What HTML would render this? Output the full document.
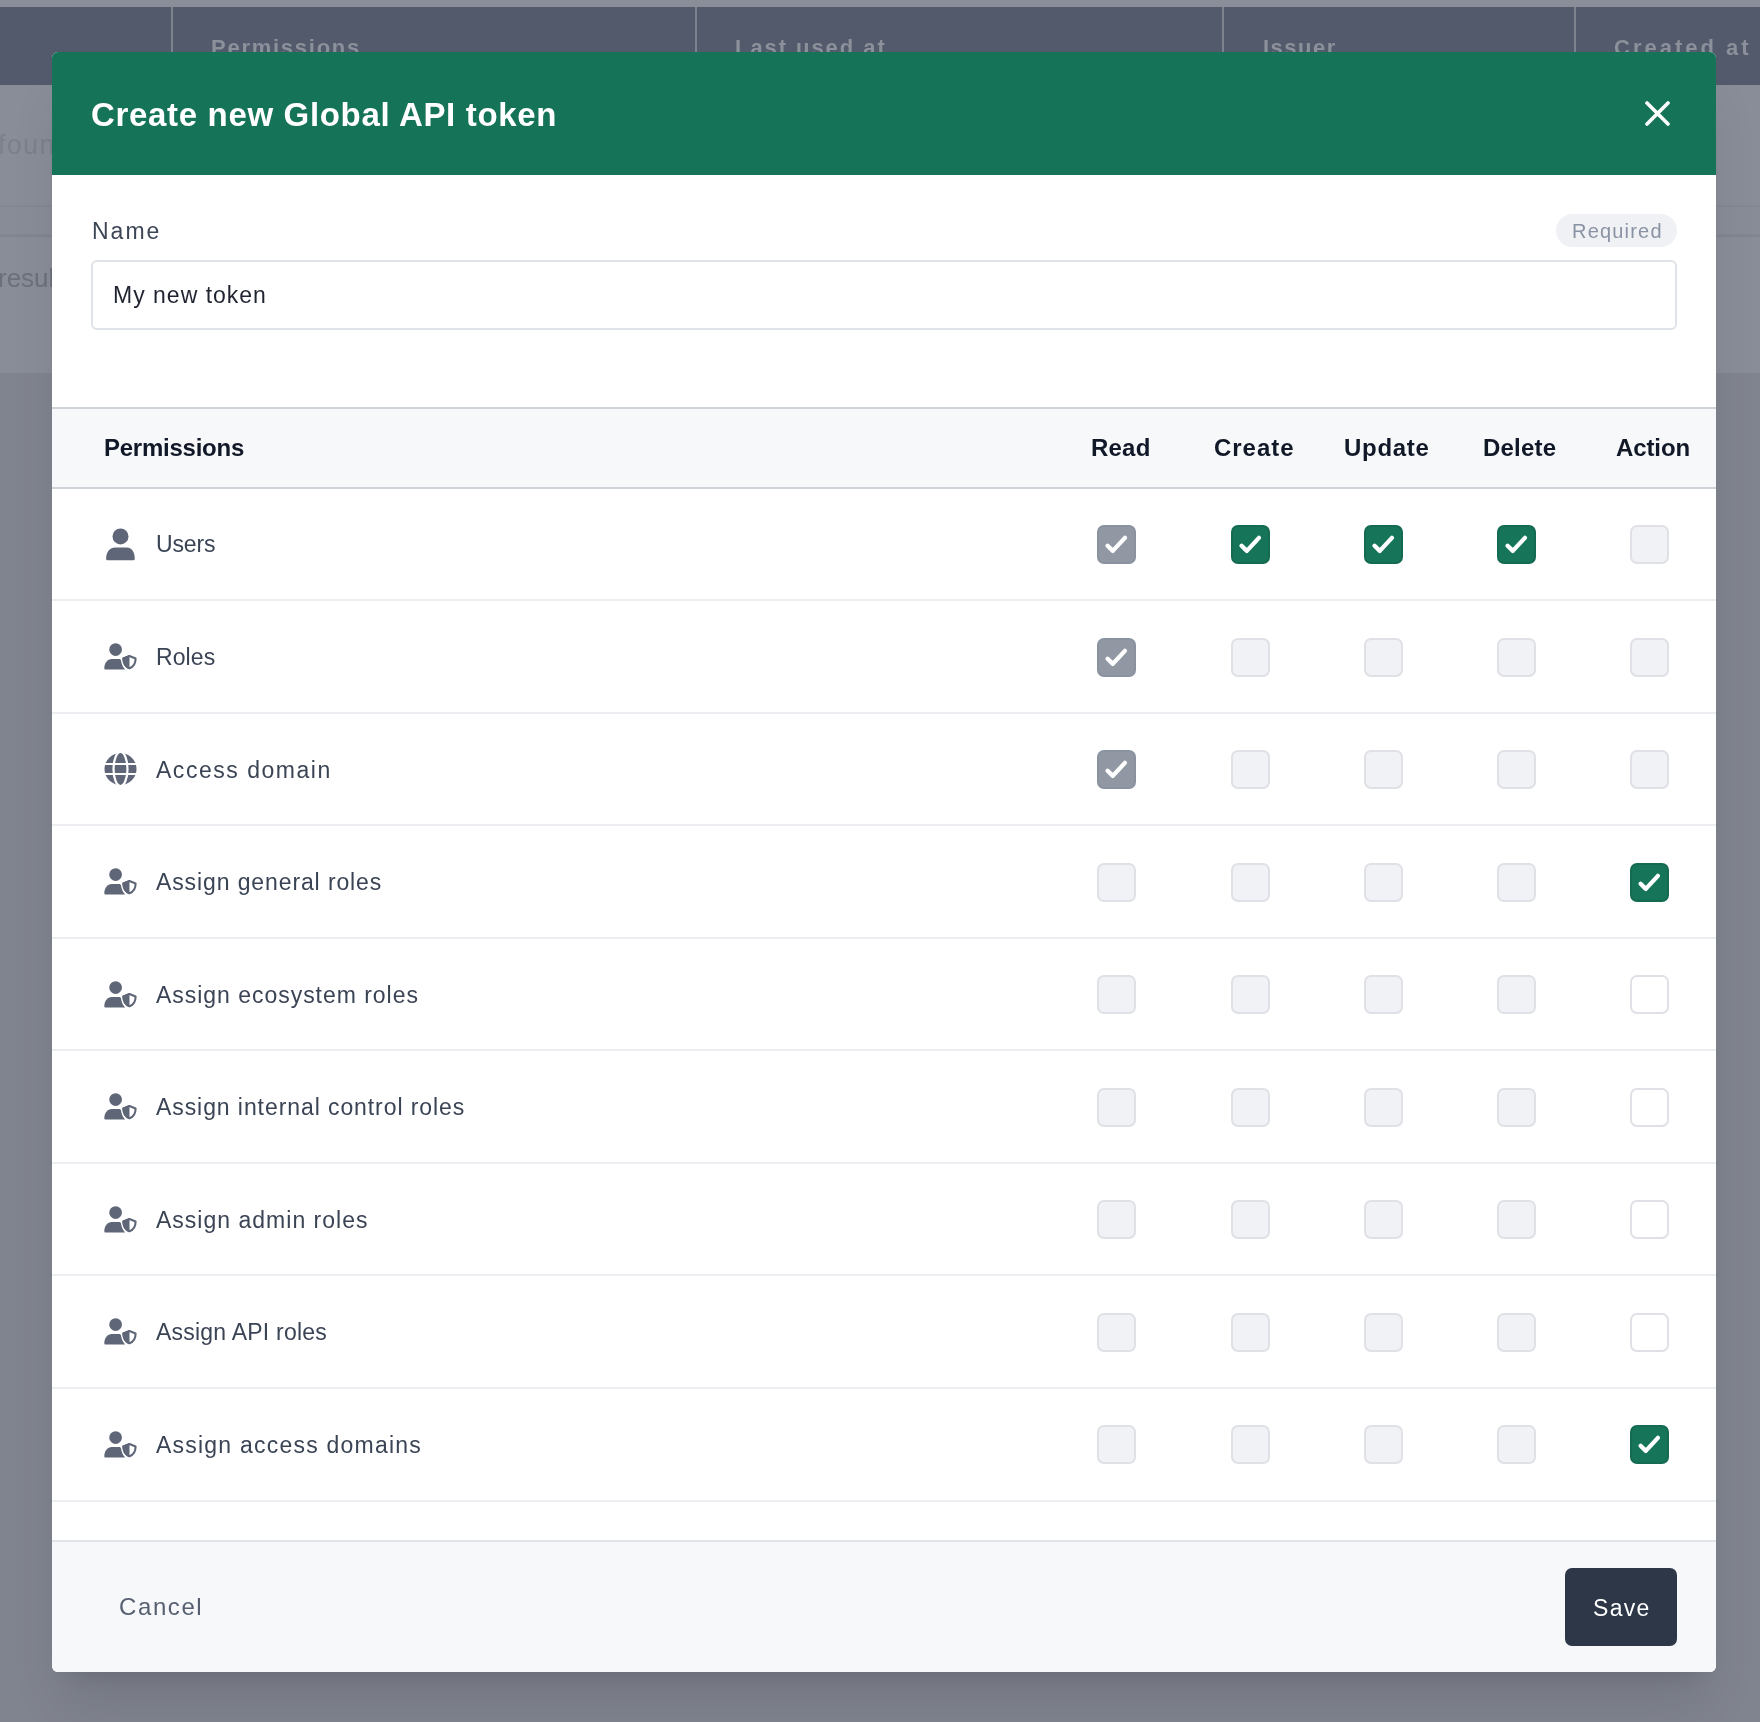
<!DOCTYPE html>
<html><head><meta charset="utf-8">
<style>
*{box-sizing:border-box;margin:0;padding:0}
html,body{width:1760px;height:1722px;overflow:hidden}
body{position:relative;background:#80848f;font-family:"Liberation Sans",sans-serif}
.a{position:absolute}
.t{position:absolute;white-space:nowrap;line-height:1}
/* background page */
#bgtop{left:0;top:0;width:1760px;height:7px;background:#8a8e99}
#bghead{left:0;top:7px;width:1760px;height:78px;background:#535a6b}
.div{top:7px;width:2px;height:78px;background:#7d828e}
.bgtxt{will-change:transform;color:#8c909b;font-size:22px;font-weight:bold;top:36.5px}
#bgrow1{left:0;top:85px;width:1760px;height:120px;background:#898d98}
#bgrow2{left:0;top:205px;width:1760px;height:31px;background:#888c97;border-top:2px solid #838792;border-bottom:2px solid #838792}
#bgrow3{left:0;top:237px;width:1760px;height:136px;background:#898d98}
/* modal */
#modal{will-change:transform;left:52px;top:52px;width:1664px;height:1620px;background:#fff;border-radius:6px;overflow:hidden;
 box-shadow:0 40px 50px -10px rgba(0,0,0,.1),0 16px 20px -12px rgba(0,0,0,.1)}
#mhead{left:0;top:0;width:1664px;height:123px;background:#157357}
#title{left:39px;top:46px;font-size:33px;font-weight:bold;color:#fff;letter-spacing:0.67px}
#close{left:1593px;top:49px;width:25px;height:25px}
#name{left:40px;top:167.5px;font-size:23px;color:#3d4657;letter-spacing:2px}
#req{left:1504px;top:162px;width:121px;height:33px;border-radius:17px;background:#eff1f4}
#reqt{left:1520px;top:168.5px;font-size:20px;color:#8a93a3;letter-spacing:1.2px}
#input{left:39px;top:208px;width:1586px;height:69.5px;border:2px solid #dfe2e7;border-radius:6px;background:#fff}
#inputt{left:61px;top:231.5px;font-size:23px;color:#1f2430;letter-spacing:1px}
#thead{left:0;top:355px;width:1664px;height:82px;background:#f7f8fa;border-top:2px solid #cfd3da;border-bottom:2px solid #cfd3da}
.th{font-size:24px;font-weight:bold;color:#111827;top:384px}
.row{left:0;width:1664px;height:2px;background:#eceef1}
.rt{left:104px;font-size:23px;color:#3b4455;letter-spacing:0.6px}
.ic{left:50px;width:36px;height:36px}
.cb{width:39px;height:39px;border-radius:7px;border:2px solid #dfe1e6;background:#f0f2f5}
.cb.w{background:#fff}
.cb.g{background:#167458;border-color:#146b51}
.cb.d{background:#9198a4;border-color:#8a92a0}
.cb svg{position:absolute;left:-2px;top:-2px}
#footer{left:0;top:1488px;width:1664px;height:132px;background:#f7f8fa;border-top:2px solid #e2e4e9}
#cancel{left:67px;top:1543px;font-size:24px;color:#576071;letter-spacing:1.6px}
#save{left:1513px;top:1516px;width:112px;height:78px;border-radius:7px;background:#2d3748}
#savet{left:1541px;top:1544.5px;font-size:23px;color:#fff;letter-spacing:1.3px}
</style></head>
<body>
<div class="a" id="bgtop"></div>
<div class="a" id="bghead"></div>
<div class="a div" style="left:171px"></div>
<div class="a div" style="left:695px"></div>
<div class="a div" style="left:1222px"></div>
<div class="a div" style="left:1574px"></div>
<div class="t bgtxt" style="left:211px;letter-spacing:1.74px">Permissions</div>
<div class="t bgtxt" style="left:735px;letter-spacing:1.94px">Last used at</div>
<div class="t bgtxt" style="left:1263px;letter-spacing:1.48px">Issuer</div>
<div class="t bgtxt" style="left:1614px;letter-spacing:2.99px">Created at</div>
<div class="a" id="bgrow1"></div>
<div class="a" id="bgrow2"></div>
<div class="a" id="bgrow3"></div>
<div class="t" style="will-change:transform;left:-2px;top:132px;font-size:27px;color:#7b808b;letter-spacing:1.3px">foun</div>
<div class="t" style="will-change:transform;left:-2px;top:265px;font-size:26px;color:#6b707c">resul</div>

<div class="a" id="modal">
 <div class="a" id="mhead"></div>
 <div class="t" id="title">Create new Global API token</div>
 <svg class="a" id="close" viewBox="0 0 25 25"><path d="M2 2L23 23M23 2L2 23" stroke="#fff" stroke-width="3.6" stroke-linecap="round"/></svg>
 <div class="t" id="name">Name</div>
 <div class="a" id="req"></div>
 <div class="t" id="reqt">Required</div>
 <div class="a" id="input"></div>
 <div class="t" id="inputt">My new token</div>
 <div class="a" id="thead"></div>
 <div class="t th" style="left:52px;letter-spacing:-0.25px">Permissions</div>
 <div class="t th" style="left:1039px;letter-spacing:0.2px">Read</div>
 <div class="t th" style="left:1162px;letter-spacing:0.96px">Create</div>
 <div class="t th" style="left:1292px;letter-spacing:0.7px">Update</div>
 <div class="t th" style="left:1431px;letter-spacing:0.2px">Delete</div>
 <div class="t th" style="left:1564px;letter-spacing:-0.1px">Action</div>
 <!--ROWS-->
<div class="a row" style="top:547.0px"></div>
<svg class="a ic" style="top:475.1px" viewBox="0 0 36 36"><circle cx="18.5" cy="9.4" r="8" fill="#5f6678"/><path d="M5.6 33.3 Q4.1 33.3 4.1 31.8 C4.1 25 8 20.6 13.1 20.6 L24.8 20.6 C29.5 20.6 32.75 25 32.75 31.8 Q32.75 33.3 31.25 33.3 Z" fill="#5f6678"/></svg>
<div class="t rt" style="top:481.4px;letter-spacing:-0.15px">Users</div>
<div class="a cb d" style="left:1045px;top:472.9px"><svg width="39" height="39" viewBox="0 0 39 39"><path d="M10.6 20.8L15.8 25.9L27.9 12.9" fill="none" stroke="#fff" stroke-width="4.3" stroke-linecap="round" stroke-linejoin="round"/></svg></div>
<div class="a cb g" style="left:1179px;top:472.9px"><svg width="39" height="39" viewBox="0 0 39 39"><path d="M10.6 20.8L15.8 25.9L27.9 12.9" fill="none" stroke="#fff" stroke-width="4.3" stroke-linecap="round" stroke-linejoin="round"/></svg></div>
<div class="a cb g" style="left:1312px;top:472.9px"><svg width="39" height="39" viewBox="0 0 39 39"><path d="M10.6 20.8L15.8 25.9L27.9 12.9" fill="none" stroke="#fff" stroke-width="4.3" stroke-linecap="round" stroke-linejoin="round"/></svg></div>
<div class="a cb g" style="left:1445px;top:472.9px"><svg width="39" height="39" viewBox="0 0 39 39"><path d="M10.6 20.8L15.8 25.9L27.9 12.9" fill="none" stroke="#fff" stroke-width="4.3" stroke-linecap="round" stroke-linejoin="round"/></svg></div>
<div class="a cb" style="left:1578px;top:472.9px"></div>
<div class="a row" style="top:659.6px"></div>
<svg class="a ic" style="top:586.2px" viewBox="0 0 36 36"><circle cx="13.6" cy="11.55" r="6.35" fill="#5f6678"/><path d="M3.3 31.4 Q2.3 31.4 2.3 30.2 C2.3 25 5.5 20.9 9.8 20.9 L17.4 20.9 C18.3 20.9 18.8 21.6 19 22.4 C19.6 26 20.8 28.8 23.1 31.4 Z" fill="#5f6678"/><path d="M27.5 18.1 L33.6 20.5 C33.6 25.6 31.2 28.9 27.5 30.2 C23.8 28.9 21.4 25.6 21.4 20.5 Z" fill="none" stroke="#5f6678" stroke-width="2.1" stroke-linejoin="round"/><path d="M27.5 17 L20.4 19.8 C20.4 26 23.4 30.1 27.5 31.3 Z" fill="#5f6678"/></svg>
<div class="t rt" style="top:594.0px;letter-spacing:0.10px">Roles</div>
<div class="a cb d" style="left:1045px;top:585.5px"><svg width="39" height="39" viewBox="0 0 39 39"><path d="M10.6 20.8L15.8 25.9L27.9 12.9" fill="none" stroke="#fff" stroke-width="4.3" stroke-linecap="round" stroke-linejoin="round"/></svg></div>
<div class="a cb" style="left:1179px;top:585.5px"></div>
<div class="a cb" style="left:1312px;top:585.5px"></div>
<div class="a cb" style="left:1445px;top:585.5px"></div>
<div class="a cb" style="left:1578px;top:585.5px"></div>
<div class="a row" style="top:772.1px"></div>
<svg class="a ic" style="top:698.5px" viewBox="0 0 36 36"><circle cx="18.5" cy="18" r="16" fill="#5f6678"/><g fill="none" stroke="#fff" stroke-width="2.2"><path d="M1 13H36M1 23H36"/><ellipse cx="18.5" cy="18" rx="7" ry="17"/></g></svg>
<div class="t rt" style="top:706.5px;letter-spacing:1.52px">Access domain</div>
<div class="a cb d" style="left:1045px;top:698.0px"><svg width="39" height="39" viewBox="0 0 39 39"><path d="M10.6 20.8L15.8 25.9L27.9 12.9" fill="none" stroke="#fff" stroke-width="4.3" stroke-linecap="round" stroke-linejoin="round"/></svg></div>
<div class="a cb" style="left:1179px;top:698.0px"></div>
<div class="a cb" style="left:1312px;top:698.0px"></div>
<div class="a cb" style="left:1445px;top:698.0px"></div>
<div class="a cb" style="left:1578px;top:698.0px"></div>
<div class="a row" style="top:884.7px"></div>
<svg class="a ic" style="top:811.2px" viewBox="0 0 36 36"><circle cx="13.6" cy="11.55" r="6.35" fill="#5f6678"/><path d="M3.3 31.4 Q2.3 31.4 2.3 30.2 C2.3 25 5.5 20.9 9.8 20.9 L17.4 20.9 C18.3 20.9 18.8 21.6 19 22.4 C19.6 26 20.8 28.8 23.1 31.4 Z" fill="#5f6678"/><path d="M27.5 18.1 L33.6 20.5 C33.6 25.6 31.2 28.9 27.5 30.2 C23.8 28.9 21.4 25.6 21.4 20.5 Z" fill="none" stroke="#5f6678" stroke-width="2.1" stroke-linejoin="round"/><path d="M27.5 17 L20.4 19.8 C20.4 26 23.4 30.1 27.5 31.3 Z" fill="#5f6678"/></svg>
<div class="t rt" style="top:819.0px;letter-spacing:0.89px">Assign general roles</div>
<div class="a cb" style="left:1045px;top:810.5px"></div>
<div class="a cb" style="left:1179px;top:810.5px"></div>
<div class="a cb" style="left:1312px;top:810.5px"></div>
<div class="a cb" style="left:1445px;top:810.5px"></div>
<div class="a cb g" style="left:1578px;top:810.5px"><svg width="39" height="39" viewBox="0 0 39 39"><path d="M10.6 20.8L15.8 25.9L27.9 12.9" fill="none" stroke="#fff" stroke-width="4.3" stroke-linecap="round" stroke-linejoin="round"/></svg></div>
<div class="a row" style="top:997.2px"></div>
<svg class="a ic" style="top:923.7px" viewBox="0 0 36 36"><circle cx="13.6" cy="11.55" r="6.35" fill="#5f6678"/><path d="M3.3 31.4 Q2.3 31.4 2.3 30.2 C2.3 25 5.5 20.9 9.8 20.9 L17.4 20.9 C18.3 20.9 18.8 21.6 19 22.4 C19.6 26 20.8 28.8 23.1 31.4 Z" fill="#5f6678"/><path d="M27.5 18.1 L33.6 20.5 C33.6 25.6 31.2 28.9 27.5 30.2 C23.8 28.9 21.4 25.6 21.4 20.5 Z" fill="none" stroke="#5f6678" stroke-width="2.1" stroke-linejoin="round"/><path d="M27.5 17 L20.4 19.8 C20.4 26 23.4 30.1 27.5 31.3 Z" fill="#5f6678"/></svg>
<div class="t rt" style="top:931.5px;letter-spacing:0.97px">Assign ecosystem roles</div>
<div class="a cb" style="left:1045px;top:923.0px"></div>
<div class="a cb" style="left:1179px;top:923.0px"></div>
<div class="a cb" style="left:1312px;top:923.0px"></div>
<div class="a cb" style="left:1445px;top:923.0px"></div>
<div class="a cb w" style="left:1578px;top:923.0px"></div>
<div class="a row" style="top:1109.8px"></div>
<svg class="a ic" style="top:1036.2px" viewBox="0 0 36 36"><circle cx="13.6" cy="11.55" r="6.35" fill="#5f6678"/><path d="M3.3 31.4 Q2.3 31.4 2.3 30.2 C2.3 25 5.5 20.9 9.8 20.9 L17.4 20.9 C18.3 20.9 18.8 21.6 19 22.4 C19.6 26 20.8 28.8 23.1 31.4 Z" fill="#5f6678"/><path d="M27.5 18.1 L33.6 20.5 C33.6 25.6 31.2 28.9 27.5 30.2 C23.8 28.9 21.4 25.6 21.4 20.5 Z" fill="none" stroke="#5f6678" stroke-width="2.1" stroke-linejoin="round"/><path d="M27.5 17 L20.4 19.8 C20.4 26 23.4 30.1 27.5 31.3 Z" fill="#5f6678"/></svg>
<div class="t rt" style="top:1044.0px;letter-spacing:0.92px">Assign internal control roles</div>
<div class="a cb" style="left:1045px;top:1035.5px"></div>
<div class="a cb" style="left:1179px;top:1035.5px"></div>
<div class="a cb" style="left:1312px;top:1035.5px"></div>
<div class="a cb" style="left:1445px;top:1035.5px"></div>
<div class="a cb w" style="left:1578px;top:1035.5px"></div>
<div class="a row" style="top:1222.4px"></div>
<svg class="a ic" style="top:1148.7px" viewBox="0 0 36 36"><circle cx="13.6" cy="11.55" r="6.35" fill="#5f6678"/><path d="M3.3 31.4 Q2.3 31.4 2.3 30.2 C2.3 25 5.5 20.9 9.8 20.9 L17.4 20.9 C18.3 20.9 18.8 21.6 19 22.4 C19.6 26 20.8 28.8 23.1 31.4 Z" fill="#5f6678"/><path d="M27.5 18.1 L33.6 20.5 C33.6 25.6 31.2 28.9 27.5 30.2 C23.8 28.9 21.4 25.6 21.4 20.5 Z" fill="none" stroke="#5f6678" stroke-width="2.1" stroke-linejoin="round"/><path d="M27.5 17 L20.4 19.8 C20.4 26 23.4 30.1 27.5 31.3 Z" fill="#5f6678"/></svg>
<div class="t rt" style="top:1156.5px;letter-spacing:1.01px">Assign admin roles</div>
<div class="a cb" style="left:1045px;top:1148.0px"></div>
<div class="a cb" style="left:1179px;top:1148.0px"></div>
<div class="a cb" style="left:1312px;top:1148.0px"></div>
<div class="a cb" style="left:1445px;top:1148.0px"></div>
<div class="a cb w" style="left:1578px;top:1148.0px"></div>
<div class="a row" style="top:1334.9px"></div>
<svg class="a ic" style="top:1261.2px" viewBox="0 0 36 36"><circle cx="13.6" cy="11.55" r="6.35" fill="#5f6678"/><path d="M3.3 31.4 Q2.3 31.4 2.3 30.2 C2.3 25 5.5 20.9 9.8 20.9 L17.4 20.9 C18.3 20.9 18.8 21.6 19 22.4 C19.6 26 20.8 28.8 23.1 31.4 Z" fill="#5f6678"/><path d="M27.5 18.1 L33.6 20.5 C33.6 25.6 31.2 28.9 27.5 30.2 C23.8 28.9 21.4 25.6 21.4 20.5 Z" fill="none" stroke="#5f6678" stroke-width="2.1" stroke-linejoin="round"/><path d="M27.5 17 L20.4 19.8 C20.4 26 23.4 30.1 27.5 31.3 Z" fill="#5f6678"/></svg>
<div class="t rt" style="top:1269.0px;letter-spacing:0.22px">Assign API roles</div>
<div class="a cb" style="left:1045px;top:1260.5px"></div>
<div class="a cb" style="left:1179px;top:1260.5px"></div>
<div class="a cb" style="left:1312px;top:1260.5px"></div>
<div class="a cb" style="left:1445px;top:1260.5px"></div>
<div class="a cb w" style="left:1578px;top:1260.5px"></div>
<div class="a row" style="top:1447.5px"></div>
<svg class="a ic" style="top:1373.7px" viewBox="0 0 36 36"><circle cx="13.6" cy="11.55" r="6.35" fill="#5f6678"/><path d="M3.3 31.4 Q2.3 31.4 2.3 30.2 C2.3 25 5.5 20.9 9.8 20.9 L17.4 20.9 C18.3 20.9 18.8 21.6 19 22.4 C19.6 26 20.8 28.8 23.1 31.4 Z" fill="#5f6678"/><path d="M27.5 18.1 L33.6 20.5 C33.6 25.6 31.2 28.9 27.5 30.2 C23.8 28.9 21.4 25.6 21.4 20.5 Z" fill="none" stroke="#5f6678" stroke-width="2.1" stroke-linejoin="round"/><path d="M27.5 17 L20.4 19.8 C20.4 26 23.4 30.1 27.5 31.3 Z" fill="#5f6678"/></svg>
<div class="t rt" style="top:1381.5px;letter-spacing:1.22px">Assign access domains</div>
<div class="a cb" style="left:1045px;top:1373.0px"></div>
<div class="a cb" style="left:1179px;top:1373.0px"></div>
<div class="a cb" style="left:1312px;top:1373.0px"></div>
<div class="a cb" style="left:1445px;top:1373.0px"></div>
<div class="a cb g" style="left:1578px;top:1373.0px"><svg width="39" height="39" viewBox="0 0 39 39"><path d="M10.6 20.8L15.8 25.9L27.9 12.9" fill="none" stroke="#fff" stroke-width="4.3" stroke-linecap="round" stroke-linejoin="round"/></svg></div>
<!--/ROWS-->
 <div class="a" id="footer"></div>
 <div class="t" id="cancel">Cancel</div>
 <div class="a" id="save"></div>
 <div class="t" id="savet">Save</div>
</div>
</body></html>
